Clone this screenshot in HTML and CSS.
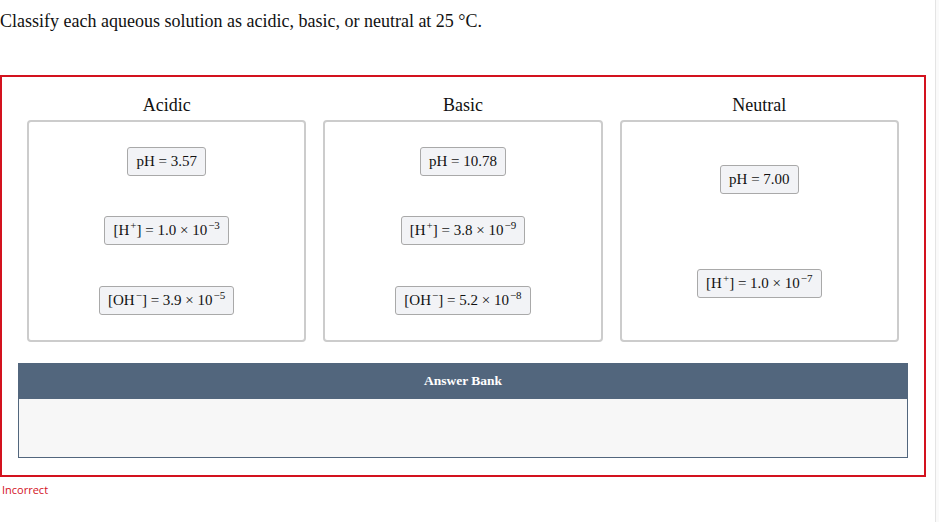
FILE: index.html
```html
<!DOCTYPE html>
<html>
<head>
<meta charset="utf-8">
<link rel="stylesheet" href="styles.css">
</head>
<body>
<p class="question">Classify each aqueous solution as acidic, basic, or neutral at 25 °C.</p>
<div class="panel">
  <div class="columns">
    <div class="col">
      <div class="label">Acidic</div>
      <div class="bin">
        <span class="token">pH = 3.57</span>
        <span class="token">[H<sup>+</sup>] = 1.0 × 10<sup>−3</sup></span>
        <span class="token">[OH<sup>−</sup>] = 3.9 × 10<sup>−5</sup></span>
      </div>
    </div>
    <div class="col">
      <div class="label">Basic</div>
      <div class="bin">
        <span class="token">pH = 10.78</span>
        <span class="token">[H<sup>+</sup>] = 3.8 × 10<sup>−9</sup></span>
        <span class="token">[OH<sup>−</sup>] = 5.2 × 10<sup>−8</sup></span>
      </div>
    </div>
    <div class="col">
      <div class="label">Neutral</div>
      <div class="bin">
        <span class="token">pH = 7.00</span>
        <span class="token">[H<sup>+</sup>] = 1.0 × 10<sup>−7</sup></span>
      </div>
    </div>
  </div>
  <div class="bank">
    <div class="bank-head">Answer Bank</div>
    <div class="bank-body"></div>
  </div>
</div>
<div class="status">Incorrect</div>
<div class="scrollbar"></div>
</body>
</html>
```
FILE: styles.css
```css
html, body {
  margin: 0;
  padding: 0;
  background: #fff;
}
body {
  font-family: "Liberation Serif", "Times New Roman", serif;
  color: #111;
  width: 926px;
}
.question {
  margin: 0;
  padding-top: 11px;
  font-size: 18px;
  line-height: 21px;
  height: 64px;
}
.panel {
  border: 2px solid #d3121e;
  padding: 17px 16px 17px 16px;
}
.columns {
  display: grid;
  grid-template-columns: 1fr 1fr 1fr;
  column-gap: 17px;
  padding: 0 9px;
}
.col {
  display: flex;
  flex-direction: column;
}
.label {
  text-align: center;
  font-size: 18px;
  line-height: 22px;
  margin-bottom: 4px;
}
.bin {
  height: 208px;
  border: 2px solid #cccccc;
  border-radius: 4px;
  padding: 5px 0;
  box-sizing: content-box;
  display: flex;
  flex-direction: column;
  align-items: center;
  justify-content: space-around;
}
.token {
  display: inline-block;
  font-size: 15px;
  line-height: 17px;
  padding: 5px 8px;
  border: 1px solid #a9a9a9;
  border-radius: 3px;
  background: #f2f3f6;
  white-space: nowrap;
}
.token sup {
  font-size: 11px;
  line-height: 0;
  vertical-align: 0;
  position: relative;
  top: -6px;
  margin-left: 1px;
}
.bank {
  margin-top: 21px;
}
.bank-head {
  background: #52667d;
  color: #fff;
  font-weight: bold;
  font-size: 13.5px;
  text-align: center;
  height: 36px;
  line-height: 36px;
}
.bank-body {
  height: 58px;
  background: #f7f7f7;
  border: 1px solid #52667d;
  border-top: none;
}
.status {
  font-family: "Open Sans", "Noto Sans", sans-serif;
  font-size: 11px;
  color: #d3121e;
  padding: 5px 0 0 2px;
}
.scrollbar {
  position: fixed;
  top: 0;
  bottom: 0;
  left: 935px;
  width: 4px;
  border-left: 1px solid #e4e4e4;
  background: #fafafa;
}
```
